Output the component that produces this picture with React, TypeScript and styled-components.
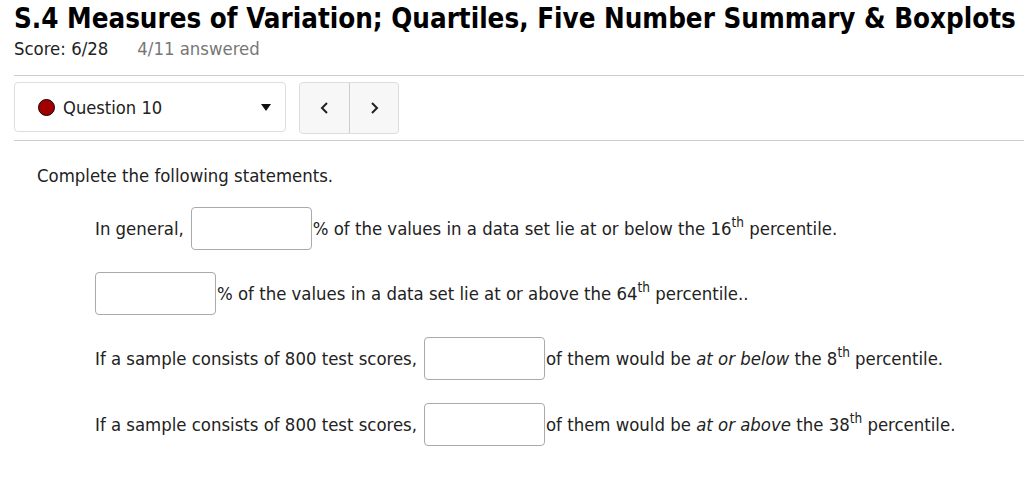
import styled, { createGlobalStyle } from 'styled-components';

const GlobalStyle = createGlobalStyle`
  body {
    margin: 0;
    background: #fff;
    font-family: "DejaVu Sans Condensed", "DejaVu Sans", sans-serif;
    color: #222;
  }
`;

interface IStatement {
  lead?: string;
  before: string;
  emph?: string;
  after: string;
  ord: string;
  end: string;
}

const statements: IStatement[] = [
  { lead: 'In general,', before: '% of the values in a data set lie at or below the ', after: '', ord: '16', end: ' percentile.' },
  { before: '% of the values in a data set lie at or above the ', after: '', ord: '64', end: ' percentile..' },
  { lead: 'If a sample consists of 800 test scores,', before: 'of them would be ', emph: 'at or below', after: ' the ', ord: '8', end: ' percentile.' },
  { lead: 'If a sample consists of 800 test scores,', before: 'of them would be ', emph: 'at or above', after: ' the ', ord: '38', end: ' percentile.' },
];

export default function App() {
  return (
    <>
      <GlobalStyle />
      <Page>
        <Title>S.4 Measures of Variation; Quartiles, Five Number Summary &amp; Boxplots</Title>
        <ScoreRow>
          <span>Score: 6/28</span>
          <Answered>4/11 answered</Answered>
        </ScoreRow>
        <NavBar>
          <QuestionSelect>
            <Dot />
            <QuestionLabel>Question 10</QuestionLabel>
            <Caret />
          </QuestionSelect>
          <NavGroup>
            <NavButton aria-label="previous">
              <svg width="12" height="14" viewBox="0 0 12 14">
                <path d="M8 2 L3 7 L8 12" fill="none" stroke="#222" strokeWidth="2" />
              </svg>
            </NavButton>
            <NavButton aria-label="next">
              <svg width="12" height="14" viewBox="0 0 12 14">
                <path d="M4 2 L9 7 L4 12" fill="none" stroke="#222" strokeWidth="2" />
              </svg>
            </NavButton>
          </NavGroup>
        </NavBar>
        <Body>
          <Intro>Complete the following statements.</Intro>
          <List>
            {statements.map((s, i) => (
              <Line key={i}>
                {s.lead && <Lead>{s.lead}</Lead>}
                <Blank />
                <Text>
                  {s.before}
                  {s.emph && <em>{s.emph}</em>}
                  {s.after}
                  {s.ord}
                  <sup>th</sup>
                  {s.end}
                </Text>
              </Line>
            ))}
          </List>
        </Body>
      </Page>
    </>
  );
}

const Page = styled.div`
  padding: 3px 0 0 14px;
`;

const Title = styled.h1`
  margin: 0;
  font-size: 27.5px;
  font-weight: 700;
  color: #000;
  line-height: 31px;
  white-space: nowrap;
`;

const ScoreRow = styled.div`
  display: flex;
  gap: 29px;
  font-size: 18.4px;
  line-height: 24px;
  margin-top: 3px;
  padding-bottom: 14px;
  border-bottom: 1px solid #ccc;
`;

const Answered = styled.span`
  color: #777;
`;

const NavBar = styled.div`
  display: flex;
  gap: 13px;
  padding: 6px 0;
  border-bottom: 1px solid #ccc;
`;

const QuestionSelect = styled.div`
  box-sizing: border-box;
  width: 272px;
  height: 50px;
  display: flex;
  align-items: center;
  padding: 0 14px 0 23px;
  border: 1px solid #ddd;
  border-radius: 4px;
`;

const Dot = styled.span`
  box-sizing: border-box;
  width: 17px;
  height: 17px;
  border-radius: 50%;
  background: #a00000;
  border: 1.5px solid #1a0000;
`;

const QuestionLabel = styled.span`
  flex: 1;
  margin-left: 8px;
  font-size: 18.2px;
`;

const Caret = styled.span`
  width: 0;
  height: 0;
  border-left: 5px solid transparent;
  border-right: 5px solid transparent;
  border-top: 7px solid #111;
`;

const NavGroup = styled.div`
  display: flex;
  height: 50px;
  border: 1px solid #ddd;
  border-radius: 4px;
  background: #f7f7f7;
  overflow: hidden;
`;

const NavButton = styled.button`
  width: 49px;
  height: 100%;
  display: flex;
  align-items: center;
  justify-content: center;
  background: transparent;
  border: 0;
  padding: 0;
  & + & {
    border-left: 1px solid #ccc;
  }
`;

const Body = styled.div`
  padding: 23px 0 0 23px;
`;

const Intro = styled.p`
  margin: 0;
  font-size: 18.4px;
  line-height: 24px;
`;

const List = styled.div`
  display: flex;
  flex-direction: column;
  gap: 22.4px;
  margin-top: 18.5px;
  padding-left: 58px;
`;

const Line = styled.div`
  display: flex;
  align-items: center;
  font-size: 18.4px;
`;

const Lead = styled.span`
  margin-right: 7px;
`;

const Blank = styled.span`
  box-sizing: border-box;
  width: 121px;
  height: 43px;
  border: 1px solid #aaa;
  border-radius: 4px;
  background: #fff;
  margin-right: 1px;
`;

const Text = styled.span`
  white-space: nowrap;
  sup {
    font-size: 13.5px;
    line-height: 0;
    vertical-align: 8px;
  }
`;
